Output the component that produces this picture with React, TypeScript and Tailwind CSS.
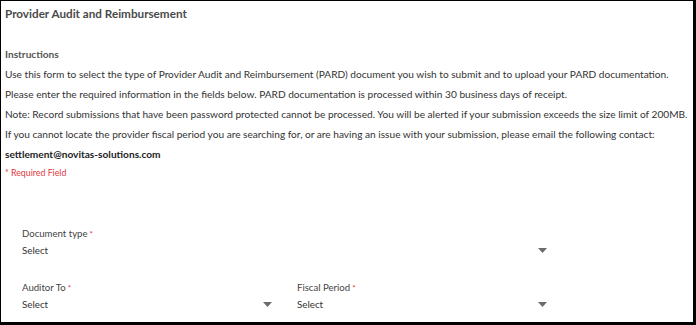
import React from "react";

const Arrow: React.FC = () => (
  <svg width="9" height="5" viewBox="0 0 9 5" className="shrink-0">
    <path d="M0 0H9L4.5 5Z" fill="#6b6b6b" />
  </svg>
);

const SelectField: React.FC<{ label: string }> = ({ label }) => (
  <div className="flex flex-col">
    <label className="text-[9.6px] leading-[16px] text-[#444]">
      {label}
      <span className="text-[#e0393e] text-[8px] align-top ml-[2px]">*</span>
    </label>
    <div className="flex items-center justify-between pr-[3px] h-[16px]">
      <span className="text-[9.8px] text-[#333]">Select</span>
      <Arrow />
    </div>
  </div>
);

const App: React.FC = () => {
  return (
    <div
      className="w-[696px] h-[325px] bg-white border-t border-l border-black border-r-[3px] border-b-[3px] overflow-hidden"
      style={{ fontFamily: "Lato, 'Open Sans', sans-serif" }}
    >
      <div className="px-[4px] pt-[3px]">
        <h1 className="text-[11.7px] leading-[18px] font-bold text-[#4a4a4a]">
          Provider Audit and Reimbursement
        </h1>

        <div className="mt-[22px] text-[10.15px] text-[#333]">
          <h2 className="font-bold text-[#555] leading-[20px]">Instructions</h2>
          <p className="leading-[20px]">
            Use this form to select the type of Provider Audit and Reimbursement (PARD) document you wish to submit and to upload your PARD documentation.
          </p>
          <p className="leading-[20px]">
            Please enter the required information in the fields below. PARD documentation is processed within 30 business days of receipt.
          </p>
          <p className="leading-[20px]">
            Note: Record submissions that have been password protected cannot be processed. You will be alerted if your submission exceeds the size limit of 200MB.
          </p>
          <p className="leading-[20px]">
            If you cannot locate the provider fiscal period you are searching for, or are having an issue with your submission, please email the following contact:
          </p>
          <p className="leading-[20px] font-bold text-[#222]">settlement@novitas-solutions.com</p>
          <p className="leading-[18px] text-[8.8px] text-[#e0393e]">* Required Field</p>
        </div>
      </div>

      <div className="pl-[21px] mt-[44px] w-[549px] flex flex-col gap-[22px]">
        <SelectField label="Document type" />
        <div className="grid grid-cols-2 gap-[22px]">
          <SelectField label="Auditor To" />
          <SelectField label="Fiscal Period" />
        </div>
      </div>
    </div>
  );
};

export default App;
